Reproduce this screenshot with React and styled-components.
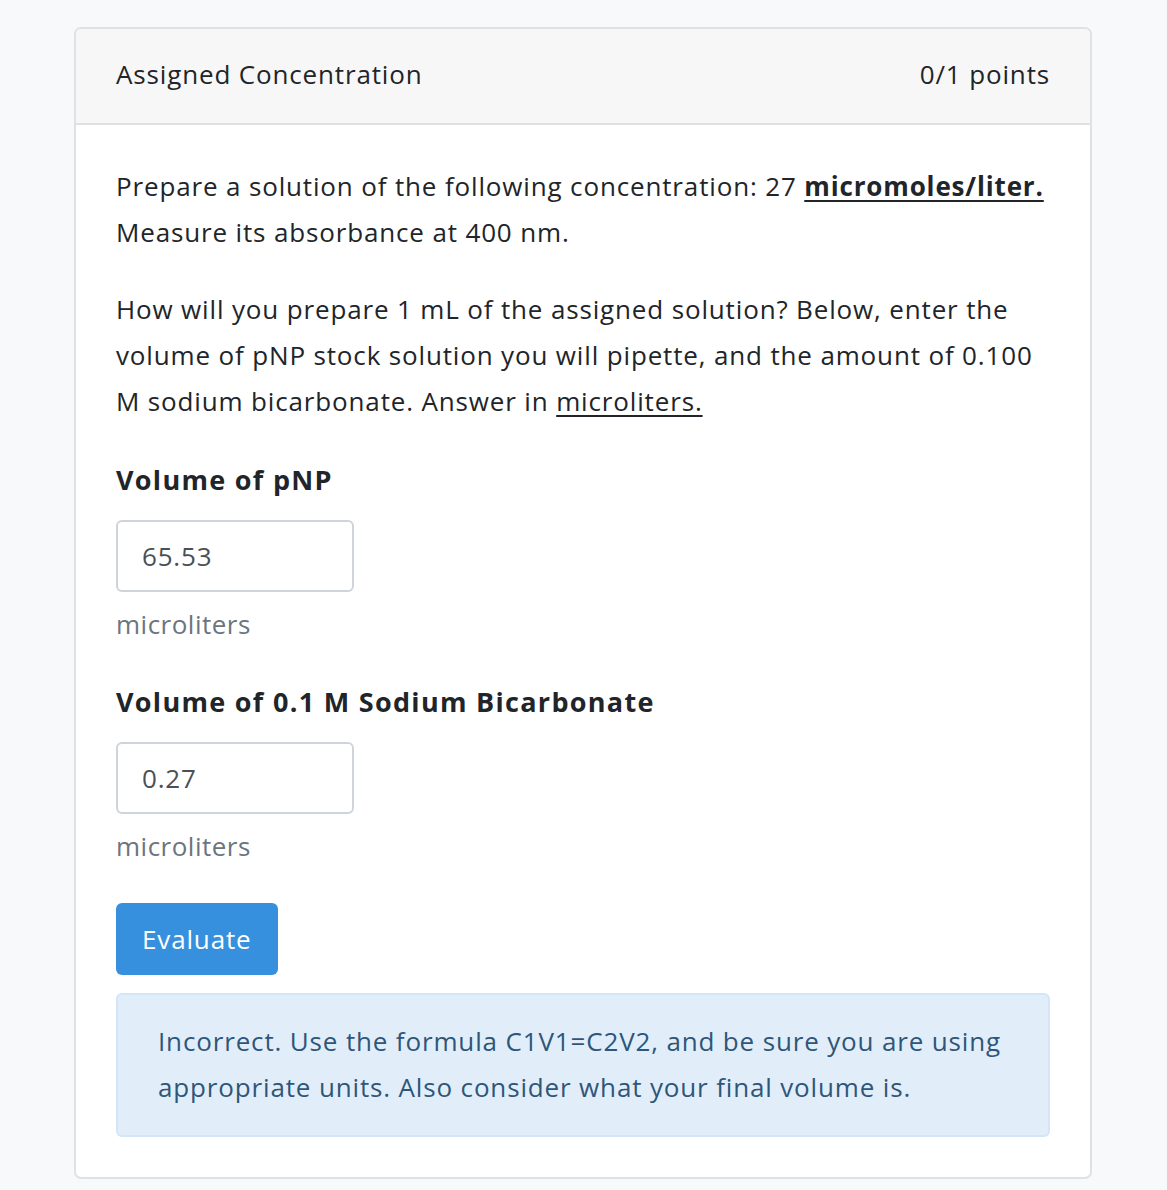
import React from "react";
import styled, { createGlobalStyle } from "styled-components";

const Global = createGlobalStyle`
  html, body { margin: 0; padding: 0; background: #f8f9fb; }
  body { font-family: "Open Sans", Lato, sans-serif; color: #212529; letter-spacing: 0.85px; }
  * { box-sizing: border-box; }
`;

const Page = styled.div`
  padding: 27px 75px 13px 74px;
`;

const Card = styled.section`
  background: #fff;
  border: 2px solid #dfe1e4;
  border-radius: 7px;
  overflow: hidden;
`;

const CardHeader = styled.header`
  display: flex;
  justify-content: space-between;
  align-items: center;
  height: 96px;
  padding: 0 40px 4px;
  background: #f7f7f7;
  border-bottom: 2px solid #dfe1e4;
  font-size: 26px;
  color: #212529;
`;

const CardBody = styled.div`
  padding: 38px 40px 40px;
`;

const Para = styled.p`
  margin: 0 0 31px;
  font-size: 26px;
  line-height: 46px;
`;

const Strong = styled.strong`
  font-weight: 700;
  text-decoration: underline;
  text-decoration-thickness: 2px;
  text-underline-offset: 4px;
`;

const U = styled.span`
  text-decoration: underline;
  text-underline-offset: 4px;
`;

const Label = styled.label`
  display: block;
  padding-top: 5px;
  font-size: 27px;
  font-weight: 700;
  letter-spacing: 1.3px;
  line-height: 40px;
  margin: 0 0 20px;
`;

const Field = styled.div`
  margin-bottom: ${(p) => (p.$last ? "39px" : "35px")};
`;

const Input = styled.input`
  display: block;
  width: 238px;
  height: 72px;
  padding: 0 24px;
  border: 2px solid #ced4da;
  border-radius: 6px;
  font-family: inherit;
  font-size: 26px;
  letter-spacing: 0.8px;
  color: #495057;
  background: #fff;
`;

const Help = styled.small`
  display: block;
  margin-top: 14px;
  font-size: 26px;
  letter-spacing: 0.5px;
  line-height: 36px;
  color: #6c757d;
`;

const Button = styled.button`
  display: block;
  height: 72px;
  padding: 0 26px;
  border: none;
  border-radius: 6px;
  background: #3690de;
  color: #fff;
  font-family: inherit;
  font-size: 26px;
  letter-spacing: 0.85px;
  margin-bottom: 18px;
`;

const Alert = styled.div`
  background: #e1eef9;
  border: 2px solid #d3e5f6;
  border-radius: 6px;
  padding: 23px 40px 25px;
  font-size: 26px;
  line-height: 46px;
  color: #2f5679;
`;

export default function App() {
  return (
    <Page>
      <Global />
      <Card>
        <CardHeader>
          <span>Assigned Concentration</span>
          <span>0/1 points</span>
        </CardHeader>
        <CardBody>
          <Para>
            Prepare a solution of the following concentration: 27{" "}
            <Strong>micromoles/liter.</Strong> Measure its absorbance at 400 nm.
          </Para>
          <Para>
            How will you prepare 1 mL of the assigned solution? Below, enter the
            volume of pNP stock solution you will pipette, and the amount of 0.100
            M sodium bicarbonate. Answer in <U>microliters.</U>
          </Para>
          <Field>
            <Label>Volume of pNP</Label>
            <Input defaultValue="65.53" />
            <Help>microliters</Help>
          </Field>
          <Field $last>
            <Label>Volume of 0.1 M Sodium Bicarbonate</Label>
            <Input defaultValue="0.27" />
            <Help>microliters</Help>
          </Field>
          <Button>Evaluate</Button>
          <Alert>
            Incorrect. Use the formula C1V1=C2V2, and be sure you are using
            appropriate units. Also consider what your final volume is.
          </Alert>
        </CardBody>
      </Card>
    </Page>
  );
}
